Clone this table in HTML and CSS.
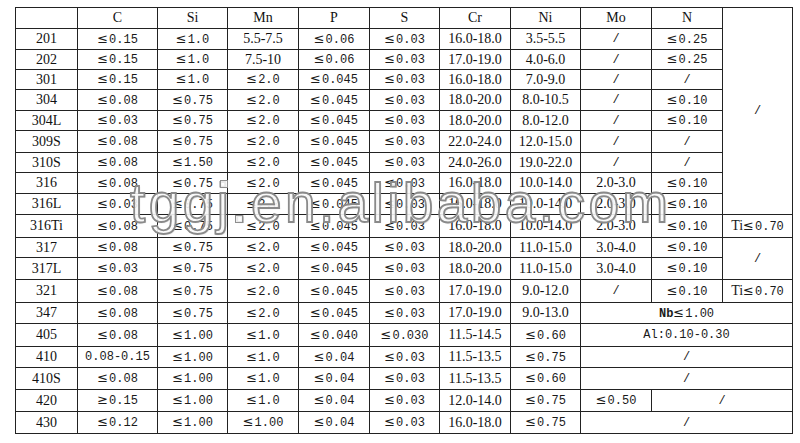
FILE: index.html
```html
<!DOCTYPE html>
<html lang="zh">
<head>
<meta charset="utf-8">
<title>Stainless steel composition</title>
<link rel="stylesheet" href="styles.css">
</head>
<body>
<div class="page">
<table class="grid">
<colgroup>
<col class="c0"><col class="c1"><col class="c2"><col class="c3"><col class="c3"><col class="c2"><col class="c3"><col class="c2"><col class="c3"><col class="c3"><col class="c2">
</colgroup>
<tbody>
<tr class="h21"><td></td><td>C</td><td>Si</td><td>Mn</td><td>P</td><td>S</td><td>Cr</td><td>Ni</td><td>Mo</td><td>N</td><td rowspan="10" class="m">/</td></tr>
<tr class="h21"><td>201</td><td class="m"><span class="le">≤</span>0.15</td><td class="m"><span class="le">≤</span>1.0</td><td>5.5-7.5</td><td class="m"><span class="le">≤</span>0.06</td><td class="m"><span class="le">≤</span>0.03</td><td>16.0-18.0</td><td>3.5-5.5</td><td class="m">/</td><td class="m"><span class="le">≤</span>0.25</td></tr>
<tr class="h20"><td>202</td><td class="m"><span class="le">≤</span>0.15</td><td class="m"><span class="le">≤</span>1.0</td><td>7.5-10</td><td class="m"><span class="le">≤</span>0.06</td><td class="m"><span class="le">≤</span>0.03</td><td>17.0-19.0</td><td>4.0-6.0</td><td class="m">/</td><td class="m"><span class="le">≤</span>0.25</td></tr>
<tr class="h20"><td>301</td><td class="m"><span class="le">≤</span>0.15</td><td class="m"><span class="le">≤</span>1.0</td><td class="m"><span class="le">≤</span>2.0</td><td class="m"><span class="le">≤</span>0.045</td><td class="m"><span class="le">≤</span>0.03</td><td>16.0-18.0</td><td>7.0-9.0</td><td class="m">/</td><td class="m">/</td></tr>
<tr class="h21"><td>304</td><td class="m"><span class="le">≤</span>0.08</td><td class="m"><span class="le">≤</span>0.75</td><td class="m"><span class="le">≤</span>2.0</td><td class="m"><span class="le">≤</span>0.045</td><td class="m"><span class="le">≤</span>0.03</td><td>18.0-20.0</td><td>8.0-10.5</td><td class="m">/</td><td class="m"><span class="le">≤</span>0.10</td></tr>
<tr class="h20"><td>304L</td><td class="m"><span class="le">≤</span>0.03</td><td class="m"><span class="le">≤</span>0.75</td><td class="m"><span class="le">≤</span>2.0</td><td class="m"><span class="le">≤</span>0.045</td><td class="m"><span class="le">≤</span>0.03</td><td>18.0-20.0</td><td>8.0-12.0</td><td class="m">/</td><td class="m"><span class="le">≤</span>0.10</td></tr>
<tr class="h22"><td>309S</td><td class="m"><span class="le">≤</span>0.08</td><td class="m"><span class="le">≤</span>0.75</td><td class="m"><span class="le">≤</span>2.0</td><td class="m"><span class="le">≤</span>0.045</td><td class="m"><span class="le">≤</span>0.03</td><td>22.0-24.0</td><td>12.0-15.0</td><td class="m">/</td><td class="m">/</td></tr>
<tr class="h20"><td>310S</td><td class="m"><span class="le">≤</span>0.08</td><td class="m"><span class="le">≤</span>1.50</td><td class="m"><span class="le">≤</span>2.0</td><td class="m"><span class="le">≤</span>0.045</td><td class="m"><span class="le">≤</span>0.03</td><td>24.0-26.0</td><td>19.0-22.0</td><td class="m">/</td><td class="m">/</td></tr>
<tr class="h21"><td>316</td><td class="m"><span class="le">≤</span>0.08</td><td class="m"><span class="le">≤</span>0.75</td><td class="m"><span class="le">≤</span>2.0</td><td class="m"><span class="le">≤</span>0.045</td><td class="m"><span class="le">≤</span>0.03</td><td>16.0-18.0</td><td>10.0-14.0</td><td>2.0-3.0</td><td class="m"><span class="le">≤</span>0.10</td></tr>
<tr class="h21"><td>316L</td><td class="m"><span class="le">≤</span>0.03</td><td class="m"><span class="le">≤</span>0.75</td><td class="m"><span class="le">≤</span>2.0</td><td class="m"><span class="le">≤</span>0.045</td><td class="m"><span class="le">≤</span>0.03</td><td>16.0-18.0</td><td>10.0-14.0</td><td>2.0-3.0</td><td class="m"><span class="le">≤</span>0.10</td></tr>
<tr class="h23"><td>316Ti</td><td class="m"><span class="le">≤</span>0.08</td><td class="m"><span class="le">≤</span>0.75</td><td class="m"><span class="le">≤</span>2.0</td><td class="m"><span class="le">≤</span>0.045</td><td class="m"><span class="le">≤</span>0.03</td><td>16.0-18.0</td><td>10.0-14.0</td><td>2.0-3.0</td><td class="m"><span class="le">≤</span>0.10</td><td class="m"><span class="sf">Ti</span><span class="le">≤</span>0.70</td></tr>
<tr class="h20"><td>317</td><td class="m"><span class="le">≤</span>0.08</td><td class="m"><span class="le">≤</span>0.75</td><td class="m"><span class="le">≤</span>2.0</td><td class="m"><span class="le">≤</span>0.045</td><td class="m"><span class="le">≤</span>0.03</td><td>18.0-20.0</td><td>11.0-15.0</td><td>3.0-4.0</td><td class="m"><span class="le">≤</span>0.10</td><td rowspan="2" class="m">/</td></tr>
<tr class="h22"><td>317L</td><td class="m"><span class="le">≤</span>0.03</td><td class="m"><span class="le">≤</span>0.75</td><td class="m"><span class="le">≤</span>2.0</td><td class="m"><span class="le">≤</span>0.045</td><td class="m"><span class="le">≤</span>0.03</td><td>18.0-20.0</td><td>11.0-15.0</td><td>3.0-4.0</td><td class="m"><span class="le">≤</span>0.10</td></tr>
<tr class="h23"><td>321</td><td class="m"><span class="le">≤</span>0.08</td><td class="m"><span class="le">≤</span>0.75</td><td class="m"><span class="le">≤</span>2.0</td><td class="m"><span class="le">≤</span>0.045</td><td class="m"><span class="le">≤</span>0.03</td><td>17.0-19.0</td><td>9.0-12.0</td><td class="m">/</td><td class="m"><span class="le">≤</span>0.10</td><td class="m"><span class="sf">Ti</span><span class="le">≤</span>0.70</td></tr>
<tr class="h21"><td>347</td><td class="m"><span class="le">≤</span>0.08</td><td class="m"><span class="le">≤</span>0.75</td><td class="m"><span class="le">≤</span>2.0</td><td class="m"><span class="le">≤</span>0.045</td><td class="m"><span class="le">≤</span>0.03</td><td>17.0-19.0</td><td>9.0-13.0</td><td colspan="3" class="m"><b class="nb">Nb</b><span class="le">≤</span>1.00</td></tr>
<tr class="h23"><td>405</td><td class="m"><span class="le">≤</span>0.08</td><td class="m"><span class="le">≤</span>1.00</td><td class="m"><span class="le">≤</span>1.0</td><td class="m"><span class="le">≤</span>0.040</td><td class="m"><span class="le">≤</span>0.030</td><td>11.5-14.5</td><td class="m"><span class="le">≤</span>0.60</td><td colspan="3" class="m">Al:0.10-0.30</td></tr>
<tr class="h21"><td>410</td><td class="m">0.08-0.15</td><td class="m"><span class="le">≤</span>1.00</td><td class="m"><span class="le">≤</span>1.0</td><td class="m"><span class="le">≤</span>0.04</td><td class="m"><span class="le">≤</span>0.03</td><td>11.5-13.5</td><td class="m"><span class="le">≤</span>0.75</td><td colspan="3" class="m">/</td></tr>
<tr class="h22"><td>410S</td><td class="m"><span class="le">≤</span>0.08</td><td class="m"><span class="le">≤</span>1.00</td><td class="m"><span class="le">≤</span>1.0</td><td class="m"><span class="le">≤</span>0.04</td><td class="m"><span class="le">≤</span>0.03</td><td>11.5-13.5</td><td class="m"><span class="le">≤</span>0.60</td><td colspan="3" class="m">/</td></tr>
<tr class="h22"><td>420</td><td class="m"><span class="le">≥</span>0.15</td><td class="m"><span class="le">≤</span>1.00</td><td class="m"><span class="le">≤</span>1.0</td><td class="m"><span class="le">≤</span>0.04</td><td class="m"><span class="le">≤</span>0.03</td><td>12.0-14.0</td><td class="m"><span class="le">≤</span>0.75</td><td class="m"><span class="le">≤</span>0.50</td><td colspan="2" class="m">/</td></tr>
<tr class="h22"><td>430</td><td class="m"><span class="le">≤</span>0.12</td><td class="m"><span class="le">≤</span>1.00</td><td class="m"><span class="le">≤</span>1.00</td><td class="m"><span class="le">≤</span>0.04</td><td class="m"><span class="le">≤</span>0.03</td><td>16.0-18.0</td><td class="m"><span class="le">≤</span>0.75</td><td colspan="3" class="m">/</td></tr>
</tbody>
</table>
<div class="watermark">tggj.en.alibaba.com</div>
<span class="sq sq1"></span>
<span class="sq sq2"></span>
</div>
</body>
</html>
```
FILE: styles.css
```css
html, body {
  margin: 0;
  padding: 0;
  background: #ffffff;
}
.page {
  position: relative;
  width: 800px;
  height: 443px;
  overflow: hidden;
  padding: 7px 0 0 15px;
  box-sizing: border-box;
}
.grid {
  border-collapse: collapse;
  table-layout: fixed;
  width: 777px;
  font-family: "Liberation Serif", "Times New Roman", serif;
  font-size: 14px;
  color: #111111;
}
.c0 { width: 62px; }
.c1 { width: 80px; }
.c2 { width: 70px; }
.c3 { width: 71px; }
.grid td {
  border: 1px solid #222222;
  padding: 0;
  text-align: center;
  vertical-align: middle;
  line-height: 14px;
  white-space: nowrap;
}
.h20 { height: 20px; }
.h21 { height: 21px; }
.h22 { height: 22px; }
.h23 { height: 23px; }
.grid td.m {
  font-family: "Liberation Mono", "Courier New", monospace;
  font-size: 12px;
  color: #1a1a1a;
}
.le {
  font-family: "DejaVu Sans", sans-serif;
  font-size: 13px;
  margin-right: 1px;
}
.sf {
  font-family: "Liberation Serif", serif;
  font-size: 14px;
}
.nb {
  font-family: "Liberation Mono", monospace;
  font-weight: bold;
}
.watermark {
  position: absolute;
  left: 130px;
  top: 176px;
  font-family: "Liberation Sans", Arial, sans-serif;
  font-size: 55px;
  line-height: 55px;
  letter-spacing: 3.4px;
  color: rgba(255, 255, 255, 0.85);
  -webkit-text-stroke: 1.8px #8a8a8a;
  text-shadow: 1px 1px 1px rgba(120, 120, 120, 0.35);
  white-space: nowrap;
}
.sq {
  position: absolute;
  width: 6px;
  height: 6px;
  border: 1.5px solid #8e8e8e;
  background: rgba(255, 255, 255, 0.8);
}
.sq1 { left: 220px; top: 180px; }
.sq2 { left: 235px; top: 215px; }
```
